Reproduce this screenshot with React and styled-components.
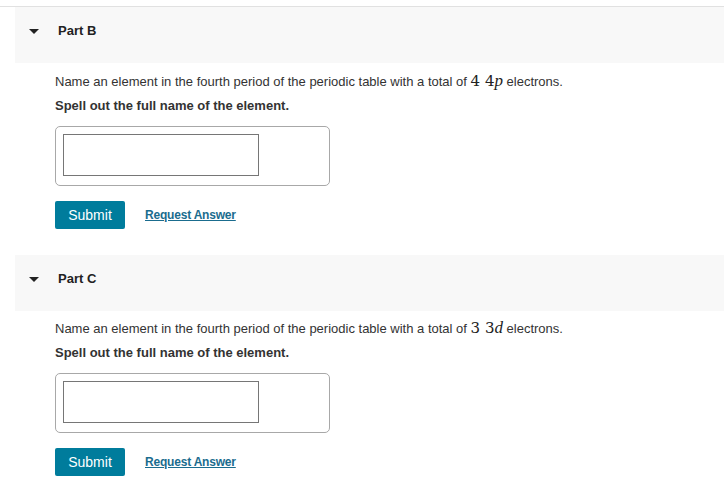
import React from "react";
import styled, { createGlobalStyle } from "styled-components";

const Global = createGlobalStyle`
  html, body { margin: 0; padding: 0; background: #fff; }
  body { font-family: "Liberation Sans", Arial, sans-serif; color: #333; }
`;

const Page = styled.div`
  padding-top: 6px;
`;

const TopRule = styled.div`
  height: 1px;
  background: #e1e1e1;
`;

const Sections = styled.div`
  padding-left: 15px;
`;

const Part = styled.section`
  padding-bottom: ${(p) => p.$gapAfter}px;
`;

const Header = styled.div`
  height: 56px;
  box-sizing: border-box;
  background: #f8f8f8;
  display: flex;
  align-items: center;
  padding: 0 0 8px 14px;
  gap: 19px;
`;

const Caret = styled.span`
  width: 0;
  height: 0;
  border-left: 5px solid transparent;
  border-right: 5px solid transparent;
  border-top: 5px solid #222;
  margin-top: 1px;
`;

const Title = styled.h2`
  margin: 0;
  font-size: 13px;
  font-weight: 700;
  color: #222;
  line-height: 16px;
`;

const Body = styled.div`
  padding: ${(p) => p.$top}px 0 0 40px;
`;

const Prompt = styled.p`
  margin: 0;
  font-size: 13px;
  line-height: 20px;
  color: #333;
`;

const Instruction = styled.p`
  margin: 4px 0 0;
  font-size: 13px;
  line-height: 20px;
  font-weight: 700;
  color: #333;
`;

const MathNum = styled.span`
  font-family: "DejaVu Serif", "Liberation Serif", serif;
  font-size: 15px;
  color: #222;
`;

const MathVar = styled.i`
  font-family: "Liberation Serif", serif;
  font-size: 17px;
`;

const AnswerBox = styled.div`
  margin-top: 10px;
  width: 275px;
  height: 60px;
  box-sizing: border-box;
  border: 1px solid #a8a8a8;
  border-radius: 5px;
  padding: 7px;
`;

const Input = styled.input`
  display: block;
  width: 196px;
  height: 42px;
  box-sizing: border-box;
  border: 1px solid #767676;
  border-radius: 0;
  margin: 0;
  padding: 0 4px;
  background: #fff;
  font: 13px "Liberation Sans", Arial, sans-serif;
  outline: none;
`;

const Actions = styled.div`
  margin-top: 15px;
  display: flex;
  align-items: center;
  gap: 20px;
`;

const SubmitButton = styled.button`
  width: 70px;
  height: 28px;
  border: none;
  border-radius: 2px;
  background: #007c9c;
  color: #fff;
  font: 14px "Liberation Sans", Arial, sans-serif;
  padding: 0;
  cursor: pointer;
`;

const RequestLink = styled.a`
  font-size: 12px;
  font-weight: 700;
  letter-spacing: -0.2px;
  color: #1a6c8e;
  text-decoration: underline;
  cursor: pointer;
`;

function PartBlock({ title, count, orbital, gapAfter, bodyTop }) {
  return (
    <Part $gapAfter={gapAfter}>
      <Header>
        <Caret />
        <Title>{title}</Title>
      </Header>
      <Body $top={bodyTop}>
        <Prompt>
          Name an element in the fourth period of the periodic table with a total of{" "}
          <MathNum>
            {count} {orbital[0]}
            <MathVar>{orbital[1]}</MathVar>
          </MathNum>{" "}
          electrons.
        </Prompt>
        <Instruction>Spell out the full name of the element.</Instruction>
        <AnswerBox>
          <Input type="text" aria-label={title + " answer"} />
        </AnswerBox>
        <Actions>
          <SubmitButton>Submit</SubmitButton>
          <RequestLink>Request Answer</RequestLink>
        </Actions>
      </Body>
    </Part>
  );
}

export default function App() {
  return (
    <Page>
      <Global />
      <TopRule />
      <Sections>
        <PartBlock title="Part B" count="4" orbital="4p" gapAfter={26} bodyTop={8} />
        <PartBlock title="Part C" count="3" orbital="3d" gapAfter={0} bodyTop={7} />
      </Sections>
    </Page>
  );
}
